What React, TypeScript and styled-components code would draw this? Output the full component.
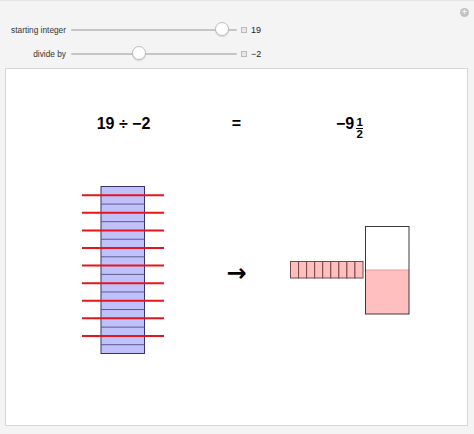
import styled, { createGlobalStyle } from "styled-components";

const GlobalStyle = createGlobalStyle`
    html, body {
        margin: 0;
        padding: 0;
        background: #f4f4f4;
    }
    body {
        font-family: "Liberation Sans", Arial, sans-serif;
        width: 474px;
        height: 434px;
        overflow: hidden;
    }
`;

const UNITS = 19;
const DIVISOR = 2;
const BAR_HEIGHT = 167;
const unit = BAR_HEIGHT / UNITS;

interface SliderProps {
    label: string;
    value: number;
    min: number;
    max: number;
    display: string;
}

const Slider = ({ label, value, min, max, display }: SliderProps) => {
    const ratio = (value - min) / (max - min);
    return (
        <Row>
            <Label>{label}</Label>
            <Track>
                <Thumb style={{ left: `calc(${ratio} * (100% - 14px))` }} />
            </Track>
            <PlusBox />
            <Value>{display}</Value>
        </Row>
    );
};

const DividedBar = () => {
    const blueLines = [];
    const redLines = [];
    for (let i = 1; i < UNITS; i++) {
        const y = 0.5 + i * unit;
        if (i % DIVISOR === 0) {
            blueLines.push(<line key={i} x1={19} x2={62.5} y1={y} y2={y} stroke="#5b5b92" strokeWidth={1} />);
        } else {
            redLines.push(<line key={i} x1={0} x2={82} y1={y} y2={y} stroke="#e3161e" strokeWidth={2} />);
        }
    }
    return (
        <svg width={84} height={169}>
            <rect x={19} y={0.5} width={43.5} height={BAR_HEIGHT} fill="#c0c0fb" stroke="#34346a" strokeWidth={1} />
            {blueLines}
            {redLines}
        </svg>
    );
};

const ResultBars = () => {
    const cells = [];
    const cellW = 72.5 / 9;
    for (let i = 0; i < 9; i++) {
        cells.push(
            <rect key={i} x={0.5 + i * cellW} y={35.5} width={cellW} height={16.5} fill="#ffbfbf" stroke="#7a4646" strokeWidth={1} />
        );
    }
    return (
        <svg width={120} height={89}>
            {cells}
            <rect x={75.5} y={44} width={43.5} height={44} fill="#ffbfbf" />
            <line x1={75.5} x2={119} y1={44} y2={44} stroke="#e39a9a" strokeWidth={1} />
            <rect x={75.5} y={0.5} width={43.5} height={87.5} fill="none" stroke="#3a3a3a" strokeWidth={1} />
        </svg>
    );
};

export default function App() {
    return (
        <Page>
            <GlobalStyle />
            <Controls>
                <TopBar>
                    <CornerButton>+</CornerButton>
                </TopBar>
                <Slider label="starting integer" value={19} min={1} max={20} display="19" />
                <Slider label="divide by" value={-2} min={-10} max={10} display="−2" />
            </Controls>
            <Panel>
                <Columns>
                    <Expr>19 ÷ −2</Expr>
                    <Expr>=</Expr>
                    <Expr>
                        −9
                        <Fraction>
                            <span>1</span>
                            <FracLine />
                            <span>2</span>
                        </Fraction>
                    </Expr>
                </Columns>
                <Figures>
                    <DividedBar />
                    <Arrow>→</Arrow>
                    <ResultBars />
                </Figures>
            </Panel>
        </Page>
    );
}

const Page = styled.div`
    display: flex;
    flex-direction: column;
    width: 474px;
    height: 434px;
    border-top: 1px solid #e6e6e6;
    box-sizing: border-box;
`;

const Controls = styled.div`
    display: flex;
    flex-direction: column;
    gap: 8px;
    padding-top: 7px;
`;

const TopBar = styled.div`
    display: flex;
    justify-content: flex-end;
    height: 10px;
    padding-right: 5px;
    margin-bottom: -4px;
`;

const CornerButton = styled.div`
    width: 9px;
    height: 9px;
    border-radius: 50%;
    background: #c2c2c2;
    color: #f4f4f4;
    font-size: 9px;
    font-weight: bold;
    line-height: 9px;
    text-align: center;
`;

const Row = styled.div`
    display: flex;
    align-items: center;
    height: 16px;
`;

const Label = styled.div`
    width: 71px;
    padding-right: 5px;
    box-sizing: border-box;
    text-align: right;
    font-size: 8.3px;
    color: #333;
    white-space: nowrap;
`;

const Track = styled.div`
    position: relative;
    width: 166px;
    height: 2px;
    background: #c6c6c6;
    border-radius: 1px;
`;

const Thumb = styled.div`
    position: absolute;
    top: -7px;
    width: 14px;
    height: 14px;
    box-sizing: border-box;
    border-radius: 50%;
    background: #fff;
    border: 1px solid #bdbdbd;
    box-shadow: 0 1px 1px rgba(0, 0, 0, 0.12);
`;

const PlusBox = styled.div`
    width: 4px;
    height: 4px;
    margin-left: 4px;
    border: 1px solid #b9b9b9;
    background: #e8e8e8;
`;

const Value = styled.div`
    margin-left: 4px;
    font-size: 9px;
    color: #222;
`;

const Panel = styled.div`
    margin: 6px 6px 0 5px;
    height: 358px;
    box-sizing: border-box;
    background: #fff;
    border: 1px solid #d6d6d6;
    padding-top: 40px;
`;

const Columns = styled.div`
    display: grid;
    grid-template-columns: repeat(3, 113px);
    justify-content: center;
    height: 24px;
    align-items: center;
    justify-items: center;
`;

const Expr = styled.div`
    display: flex;
    align-items: center;
    font-size: 16px;
    font-weight: bold;
    color: #000;
    white-space: pre;
`;

const Fraction = styled.div`
    display: flex;
    flex-direction: column;
    align-items: center;
    margin-left: 2px;
    margin-top: 9px;
    font-size: 11.5px;
    line-height: 9px;
`;

const FracLine = styled.div`
    width: 7px;
    height: 1px;
    margin: 1px 0;
    background: #000;
`;

const Figures = styled(Columns)`
    height: auto;
    margin-top: 53px;
`;

const Arrow = styled.div`
    font-family: "DejaVu Sans", sans-serif;
    font-weight: bold;
    font-size: 24px;
    line-height: 24px;
    color: #000;
    margin-top: 4px;
`;
